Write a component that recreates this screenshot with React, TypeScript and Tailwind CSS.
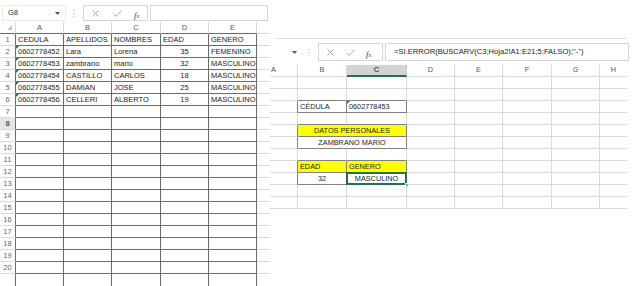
import React from "react";

const leftData: string[][] = [
  ["CEDULA", "APELLIDOS", "NOMBRES", "EDAD", "GENERO"],
  ["0602778452", "Lara", "Lorena", "35", "FEMENINO"],
  ["0602778453", "zambrano", "mario", "32", "MASCULINO"],
  ["0602778454", "CASTILLO", "CARLOS", "18", "MASCULINO"],
  ["0602778455", "DAMIAN", "JOSE", "25", "MASCULINO"],
  ["0602778456", "CELLERI", "ALBERTO", "19", "MASCULINO"],
];

function Tri() {
  return (
    <div className="absolute top-0 left-0 w-0 h-0 border-t-[3px] border-t-[#217346] border-r-[3px] border-r-transparent" />
  );
}

function XIcon() {
  return (
    <svg width="7" height="7" viewBox="0 0 7 7" className="shrink-0">
      <path d="M0.5 0.5 L6.5 6.5 M6.5 0.5 L0.5 6.5" stroke="#a8a8a8" strokeWidth="1" fill="none" />
    </svg>
  );
}

function CheckIcon() {
  return (
    <svg width="9" height="7" viewBox="0 0 9 7" className="shrink-0">
      <path d="M0.5 3.8 L3.2 6.3 L8.5 0.6" stroke="#a8a8a8" strokeWidth="1" fill="none" />
    </svg>
  );
}

function Fx() {
  return (
    <span className="shrink-0 font-['Liberation_Serif',serif] italic text-[#444] leading-none">
      <span className="text-[9px]">f</span>
      <span className="text-[6px]">x</span>
    </span>
  );
}

function Arrow() {
  return (
    <svg width="5" height="3" viewBox="0 0 5 3" className="shrink-0">
      <path d="M0 0 L5 0 L2.5 3 Z" fill="#555" />
    </svg>
  );
}

function Dots() {
  return (
    <svg width="2" height="7" viewBox="0 0 2 7" className="shrink-0">
      <rect x="0.5" y="0" width="1" height="1" fill="#b5b5b5" />
      <rect x="0.5" y="3" width="1" height="1" fill="#b5b5b5" />
      <rect x="0.5" y="6" width="1" height="1" fill="#b5b5b5" />
    </svg>
  );
}

function LeftPanel() {
  const rows = Array.from({ length: 20 }, (_, i) => i + 1);
  return (
    <div className="w-[270px] shrink-0 flex flex-col">
      {/* formula bar */}
      <div className="h-[28px] flex items-start pt-[5px]">
        <div className="ml-[2px] w-[64px] h-[16px] border border-[#ececec] flex items-center pl-[5px] pr-[5px] text-[7.5px] text-[#333]">
          <span>G8</span>
          <span className="ml-auto">
            <Arrow />
          </span>
        </div>
        <div className="ml-[7px] h-[16px] flex items-center">
          <Dots />
        </div>
        <div className="ml-[8px] w-[65px] h-[16px] border border-[#d6d6d6] flex items-center pl-[8px]">
          <XIcon />
          <span className="ml-[14px]">
            <CheckIcon />
          </span>
          <span className="ml-[12px]">
            <Fx />
          </span>
        </div>
        <div className="ml-[2px] w-[118px] h-[16px] border border-[#d6d6d6]" />
      </div>
      {/* grid */}
      <div className="grid grid-cols-[16px_48px_48px_49px_48px_48px_13px] auto-rows-[12px] text-[7.5px]">
        {/* header */}
        <div className="box-border border-r border-b border-r-[#dadada] border-b-[#6b6b6b] flex items-end justify-end pr-[3px] pb-[3px]">
          <svg width="5" height="5" viewBox="0 0 5 5">
            <path d="M5 0 L5 5 L0 5 Z" fill="#c4c4c4" />
          </svg>
        </div>
        {["A", "B", "C", "D", "E"].map((l) => (
          <div
            key={l}
            className="box-border border-r border-b border-r-[#dadada] border-b-[#6b6b6b] flex items-center justify-center text-[#555] leading-[11px]"
          >
            {l}
          </div>
        ))}
        <div className="box-border border-b border-b-[#dadada]" />
        {rows.map((r) => {
          const d = leftData[r - 1];
          return (
            <React.Fragment key={r}>
              <div
                className={
                  r === 8
                    ? "box-border border-r border-b border-r-[#6b6b6b] border-b-[#dadada] bg-[#e6e6e6] text-[#217346] font-bold flex items-center justify-center leading-[11px]"
                    : "box-border border-r border-b border-r-[#6b6b6b] border-b-[#dadada] text-[#666] flex items-center justify-center leading-[11px]"
                }
              >
                {r}
              </div>
              {[0, 1, 2, 3, 4].map((c) => (
                <div
                  key={c}
                  className={
                    c === 3 && r > 1
                      ? "relative box-border border-r border-b border-r-[#6b6b6b] border-b-[#6b6b6b] leading-[11px] whitespace-nowrap text-center"
                      : "relative box-border border-r border-b border-r-[#6b6b6b] border-b-[#6b6b6b] leading-[11px] whitespace-nowrap pl-[2px]"
                  }
                >
                  {c === 0 && r >= 2 && r <= 6 ? <Tri /> : null}
                  {d ? d[c] : ""}
                </div>
              ))}
              <div className="box-border border-b border-b-[#dadada]" />
            </React.Fragment>
          );
        })}
        <div className="border-r border-r-[#6b6b6b]" />
        <div className="border-r border-r-[#6b6b6b]" />
        <div className="border-r border-r-[#6b6b6b]" />
        <div className="border-r border-r-[#6b6b6b]" />
        <div className="border-r border-r-[#6b6b6b]" />
        <div className="border-r border-r-[#6b6b6b]" />
        <div />
      </div>
    </div>
  );
}

const rCols = ["A", "B", "C", "D", "E", "F", "G", "H"];

function bordered(r: number, c: number) {
  return (c === 1 || c === 2) && [3, 5, 6, 8, 9].includes(r);
}

type Cell = { text: string; align: "l" | "c"; yellow?: boolean; tri?: boolean; span?: boolean; sel?: boolean };

function rightCell(r: number, c: number): Cell | null {
  if (r === 3 && c === 1) return { text: "CÉDULA", align: "l" };
  if (r === 3 && c === 2) return { text: "0602778453", align: "l", tri: true };
  if (r === 5 && c === 1) return { text: "DATOS PERSONALES", align: "c", yellow: true, span: true };
  if (r === 6 && c === 1) return { text: "ZAMBRANO MARIO", align: "c", span: true };
  if (r === 8 && c === 1) return { text: "EDAD", align: "l", yellow: true };
  if (r === 8 && c === 2) return { text: "GENERO", align: "l", yellow: true };
  if (r === 9 && c === 1) return { text: "32", align: "c" };
  if (r === 9 && c === 2) return { text: "MASCULINO", align: "c", sel: true };
  return null;
}

function RightPanel() {
  const rows = Array.from({ length: 11 }, (_, i) => i + 1);
  return (
    <div className="w-[370px] shrink-0 flex flex-col">
      <div className="h-[38px]" />
      <div className="ml-[5px] w-[352px] h-px bg-[#dedede]" />
      {/* formula bar */}
      <div className="mt-[4px] h-[18px] flex items-stretch">
        <div className="w-[31px] flex items-center justify-end pr-[4px]">
          <Arrow />
        </div>
        <div className="ml-[7px] flex items-center">
          <Dots />
        </div>
        <div className="ml-[8px] w-[65px] border border-[#d6d6d6] flex items-center pl-[8px]">
          <XIcon />
          <span className="ml-[12px]">
            <CheckIcon />
          </span>
          <span className="ml-[11px]">
            <Fx />
          </span>
        </div>
        <div className="ml-[2px] w-[244px] border border-[#d6d6d6] flex items-center pl-[8px] text-[7.6px] text-[#222] whitespace-nowrap">
          =SI.ERROR(BUSCARV(C3;Hoja2!A1:E21;5;FALSO);"-")
        </div>
      </div>
      {/* grid */}
      <div className="mt-[4px] grid grid-cols-[28px_49px_60px_48px_48px_49px_48px_27px] auto-rows-[12px] text-[7.3px]">
        {rCols.map((l, i) =>
          i === 2 ? (
            <div
              key={l}
              className="box-border border-r border-b-2 border-r-[#c8c8c8] border-b-[#217346] bg-[#d4d4d4] flex items-center justify-center text-[#217346] font-bold text-[8px]"
            >
              {l}
            </div>
          ) : i === 0 ? (
            <div key={l} className="box-border border-r border-b border-r-[#dadada] border-b-[#dadada] flex items-center pl-[1px] text-[#555]">
              <span>{l}</span>
            </div>
          ) : (
            <div
              key={l}
              className={
                i === 7
                  ? "box-border border-b border-b-[#dadada] flex items-center justify-center text-[#555]"
                  : "box-border border-r border-b border-r-[#dadada] border-b-[#dadada] flex items-center justify-center text-[#555]"
              }
            >
              {l}
            </div>
          )
        )}
        {rows.map((r) =>
          rCols.map((_, c) => {
            const prev = c === 2 ? rightCell(r, 1) : null;
            if (prev && prev.span) return null;
            const cell = rightCell(r, c);
            const lastC = cell && cell.span ? c + 1 : c;
            const rd = bordered(r, lastC) || bordered(r, lastC + 1);
            const bd = bordered(r, c) || bordered(r + 1, c);
            const key = `${r}-${c}`;
            const rClass = c === 7 ? "" : rd ? "border-r border-r-[#808080]" : "border-r border-r-[#dadada]";
            const bClass = bd ? "border-b border-b-[#808080]" : "border-b border-b-[#dadada]";
            const span = cell && cell.span ? "col-span-2" : "";
            const bg = cell && cell.yellow ? "bg-[#ffff00]" : "";
            const al = cell && cell.align === "c" ? "text-center" : "pl-[2px]";
            return (
              <div
                key={key}
                className={`relative box-border leading-[11px] whitespace-nowrap text-[#222] ${rClass} ${bClass} ${span} ${bg} ${al}`}
              >
                {cell && cell.tri ? <Tri /> : null}
                {cell ? cell.text : ""}
                {cell && cell.sel ? (
                  <>
                    <div className="absolute -left-[1px] -top-[1px] -right-[1px] -bottom-[1px] border-2 border-[#217346]" />
                    <div className="absolute -right-[3px] -bottom-[3px] w-[4px] h-[4px] bg-[#217346] border border-white" />
                  </>
                ) : null}
              </div>
            );
          })
        )}
      </div>
    </div>
  );
}

export default function App() {
  return (
    <div className="w-[640px] h-[286px] overflow-hidden bg-white flex font-['Liberation_Sans',Arial,sans-serif] text-[#222]">
      <LeftPanel />
      <RightPanel />
    </div>
  );
}
